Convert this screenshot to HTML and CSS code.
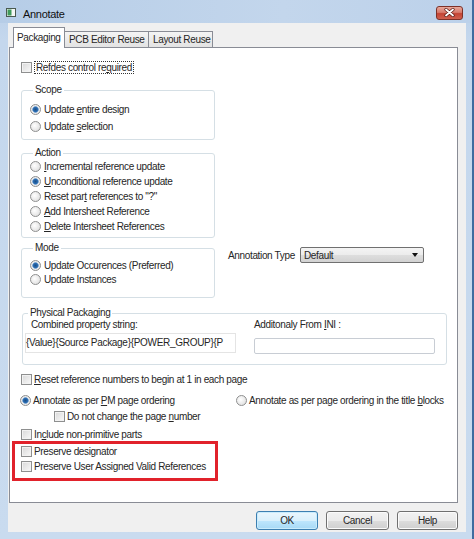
FILE: index.html
```html
<!DOCTYPE html>
<html>
<head>
<meta charset="utf-8">
<link rel="stylesheet" href="styles.css">
</head>
<body>
<div class="window">
  <div class="titlebar">
    <svg class="app-icon" width="10" height="9" viewBox="0 0 10 9">
      <rect x="0.5" y="0.5" width="9" height="8" fill="#f4f6f4" stroke="#4a5a50"/>
      <rect x="1.5" y="1.5" width="4" height="6" fill="#3f9a5a"/>
    </svg>
    <span class="title">Annotate</span>
    <span class="close">
      <svg width="11" height="9" viewBox="0 0 11 9">
        <path d="M2 1.5 L9 7.5 M9 1.5 L2 7.5" stroke="#5a1a14" stroke-width="3.2" stroke-linecap="round"/>
        <path d="M2 1.5 L9 7.5 M9 1.5 L2 7.5" stroke="#ffffff" stroke-width="1.8" stroke-linecap="round"/>
      </svg>
    </span>
  </div>
  <div class="client">
    <div class="tabs">
      <div class="tab active">Packaging</div>
      <div class="tab">PCB Editor Reuse</div>
      <div class="tab">Layout Reuse</div>
    </div>
    <div class="panel">
      <div class="row h14 first"><span class="cb"></span><span class="focus">Refdes control re<u>q</u>uired</span></div>

      <fieldset class="group scope">
        <legend>Scope</legend>
        <div class="row h17"><span class="rb on"></span><span>Update <u>e</u>ntire design</span></div>
        <div class="row h17"><span class="rb"></span><span>Update <u>s</u>election</span></div>
      </fieldset>

      <fieldset class="group action">
        <legend>Action</legend>
        <div class="row h15"><span class="rb"></span><span><u>I</u>ncremental reference update</span></div>
        <div class="row h15"><span class="rb on"></span><span><u>U</u>nconditional reference update</span></div>
        <div class="row h15"><span class="rb"></span><span>Reset par<u>t</u> references to "?"</span></div>
        <div class="row h15"><span class="rb"></span><span><u>A</u>dd Intersheet Reference</span></div>
        <div class="row h15"><span class="rb"></span><span><u>D</u>elete Intersheet References</span></div>
      </fieldset>

      <div class="mode-row">
        <fieldset class="group mode">
          <legend>Mode</legend>
          <div class="row h14"><span class="rb on"></span><span>Update Occurences (Preferred)</span></div>
          <div class="row h14"><span class="rb"></span><span>Update Instances</span></div>
        </fieldset>
        <div class="anno">
          <span class="anno-label">Annotation Type</span>
          <div class="combo"><span>Default</span><span class="arrow"></span></div>
        </div>
      </div>

      <fieldset class="group phys">
        <legend>Physical Packaging</legend>
        <div class="phys-cols">
          <div class="pcol left">
            <div class="plabel">Combined property string:</div>
            <div class="pbox wide">{Value}{Source Package}{POWER_GROUP}{P</div>
          </div>
          <div class="pcol right">
            <div class="plabel r">Additonaly From <u>I</u>NI :</div>
            <div class="pbox input"></div>
          </div>
        </div>
      </fieldset>

      <div class="row h14 reset"><span class="cb"></span><span><u>R</u>eset reference numbers to begin at 1 in each page</span></div>

      <div class="radio-pair">
        <div class="row h14 rp-left"><span class="rb on"></span><span>Annotate as per <u>P</u>M page ordering</span></div>
        <div class="row h14 rp-right"><span class="rb"></span><span>Annotate as per page ordering in the title <u>b</u>locks</span></div>
      </div>

      <div class="row h14 nochange"><span class="cb"></span><span>Do not change the page <u>n</u>umber</span></div>
      <div class="row h14 include"><span class="cb"></span><span>In<u>c</u>lude non-primitive parts</span></div>

      <div class="highlight">
        <div class="row h15"><span class="cb"></span><span>Preserve designator</span></div>
        <div class="row h15"><span class="cb"></span><span>Preserve User Assigned Valid References</span></div>
      </div>
    </div>
    <div class="buttons">
      <div class="btn default">OK</div>
      <div class="btn">Cancel</div>
      <div class="btn">Help</div>
    </div>
  </div>
</div>
</body>
</html>
```

FILE: styles.css
```css
* { box-sizing: border-box; }
html, body { margin: 0; padding: 0; }
body {
  width: 474px;
  height: 539px;
  overflow: hidden;
  font-family: "Liberation Sans", Arial, sans-serif;
  font-size: 10px;
  letter-spacing: -0.35px;
  color: #262626;
  background: #c6d9ee;
}
u { text-decoration: underline; text-underline-offset: 1px; }

.window {
  width: 474px;
  height: 539px;
  display: flex;
  flex-direction: column;
  background: linear-gradient(to bottom, #b9cfe8 0, #c4d7ed 40px, #c9dbef 100%);
  border-right: 2px solid #3f6c9f;
}

.titlebar {
  height: 23px;
  display: flex;
  align-items: center;
  flex: none;
  background: linear-gradient(to right, #b6cde7, #c3d6ec 60%, #bcd1ea);
}
.app-icon { margin-left: 6px; margin-top: 2px; flex: none; }
.title {
  margin-left: 7px;
  font-size: 11px;
  letter-spacing: -0.3px;
  color: #101010;
  margin-top: 4px;
}
.close {
  margin-left: auto;
  margin-right: 9px;
  margin-top: 2px;
  width: 27px;
  height: 14px;
  border: 1px solid #7d3128;
  border-radius: 3px;
  background: linear-gradient(to bottom, #e9a99b 0, #d77a6c 45%, #c44434 55%, #d0604f 100%);
  display: flex;
  align-items: center;
  justify-content: center;
}

.client {
  flex: 1;
  margin: 0 6px 7px 8px;
  background: #f0f0f0;
  padding: 4px 0 0 1px;
  display: flex;
  flex-direction: column;
}

.tabs {
  display: flex;
  align-items: flex-end;
  height: 20px;
  margin-left: 4px;
  position: relative;
  z-index: 1;
}
.tab {
  height: 16px;
  padding: 0 4px;
  border: 1px solid #898c95;
  border-bottom: none;
  margin-right: -1px;
  background: linear-gradient(to bottom, #f4f4f4, #e3e3e3);
  display: flex;
  align-items: center;
  white-space: nowrap;
}
.tab:nth-child(2) { width: 85px; padding-left: 4px; }
.tab:nth-child(3) { width: 65px; }
.tab.active {
  width: 52px;
  height: 21px;
  margin-bottom: -1px;
  background: #ffffff;
  padding-left: 3px;
  padding-bottom: 2px;
}

.panel {
  width: 449px;
  height: 456px;
  border: 1px solid #898c95;
  background: #ffffff;
  padding: 0 0 0 11px;
  display: flex;
  flex-direction: column;
  flex: none;
}

.row {
  display: flex;
  align-items: center;
  white-space: nowrap;
}
.h14 { height: 14px; }
.h15 { height: 15px; }
.h17 { height: 17px; }

.cb {
  width: 11px;
  height: 11px;
  flex: none;
  border: 1px solid #8e8f8f;
  background: linear-gradient(135deg, #d8d8d8, #f9f9f9);
  box-shadow: inset 0 0 0 1px #f2f2f2;
  margin-right: 2px;
}
.rb {
  width: 11px;
  height: 11px;
  flex: none;
  border-radius: 50%;
  border: 1px solid #8e8f8f;
  background: radial-gradient(circle at 40% 40%, #ffffff 0, #e4e4e4 70%, #d0d0d0 100%);
  margin-right: 3px;
}
.rb.on {
  background: radial-gradient(circle at 50% 50%, #1b4d86 0, #2a6cb0 2.2px, #7fa8d4 3px, #eeeeee 3.6px, #dcdcdc 100%);
}

.first { margin-top: 12px; }
.focus {
  border: 1px dotted #333;
  padding: 0 1px;
  line-height: 11px;
}

.group {
  margin: 0;
  padding: 0 0 0 8px;
  width: 194px;
  min-width: 0;
  border: 1px solid #d5dfe5;
  border-radius: 3px;
}
.group legend {
  padding: 0 2px;
  margin-left: 3px;
  height: 12px;
  line-height: 12px;
}
.scope { margin-top: 10px; padding-top: 5px; padding-bottom: 4px; }
.action { margin-top: 7px; padding-top: 0; padding-bottom: 3px; }
.mode-row { display: flex; margin-top: 4px; }
.mode { padding-top: 4px; padding-bottom: 11px; }

.anno {
  display: flex;
  align-items: center;
  margin-left: 13px;
  margin-top: 5px;
  height: 16px;
}
.anno-label { width: 72px; flex: none; }
.combo {
  width: 124px;
  height: 16px;
  border: 1px solid #707070;
  border-radius: 2px;
  background: linear-gradient(to bottom, #f4f4f4 0, #ececec 50%, #dedede 51%, #d2d2d2 100%);
  display: flex;
  align-items: center;
  padding-left: 3px;
}
.arrow {
  margin-left: auto;
  margin-right: 5px;
  width: 0;
  height: 0;
  border-left: 3.5px solid transparent;
  border-right: 3.5px solid transparent;
  border-top: 4px solid #111;
}

.phys {
  margin-top: 9px;
  margin-left: 1px;
  width: 425px;
  padding: 0 10px 10px 2px;
}
.phys-cols { display: flex; }
.pcol.left { width: 211px; }
.pcol.right { width: 181px; margin-left: 18px; }
.plabel { height: 12px; line-height: 12px; padding-left: 6px; }
.plabel.r { padding-left: 0; }
.pbox {
  white-space: nowrap;
}
.pbox.wide {
  margin-top: 2px;
  height: 20px;
  line-height: 18px;
  border: 1px solid #e4e4e4;
  padding-left: 0;
  letter-spacing: -0.3px;
}
.pbox.input {
  margin-top: 7px;
  height: 16px;
  border: 1px solid #c8cdd4;
  border-radius: 2px;
  background: #fff;
}

.reset { margin-top: 7px; }
.radio-pair { display: flex; margin-top: 7px; }
.rp-left { width: 216px; margin-left: -1px; }
.rp-left .rb { margin-right: 2px; }
.rp-right .rb { margin-right: 2px; }
.nochange { margin-top: 2px; margin-left: 33px; }
.include { margin-top: 4px; }

.highlight {
  margin-left: -9px;
  width: 206px;
  border: 3px solid #e1222b;
  padding: 0 0 4px 6px;
}

.buttons {
  display: flex;
  justify-content: flex-end;
  margin-top: 8px;
  padding-right: 8px;
  gap: 7px;
}
.btn {
  height: 19px;
  border: 1px solid #707070;
  border-radius: 3px;
  background: linear-gradient(to bottom, #f2f2f2 0, #ebebeb 50%, #dddddd 51%, #cfcfcf 100%);
  display: flex;
  align-items: center;
  justify-content: center;
  box-shadow: inset 0 0 0 1px #fbfbfb;
}
.btn:nth-child(1) { width: 62px; }
.btn:nth-child(2) { width: 63px; margin-left: 1px; }
.btn:nth-child(3) { width: 61px; margin-left: 1px; }
.btn.default {
  border-color: #3c7fb1;
  background: linear-gradient(to bottom, #eaf6fd 0, #d9f0fc 50%, #bee6fd 51%, #a7d9f5 100%);
  box-shadow: inset 0 0 0 1px #c9ecfd;
}
```
